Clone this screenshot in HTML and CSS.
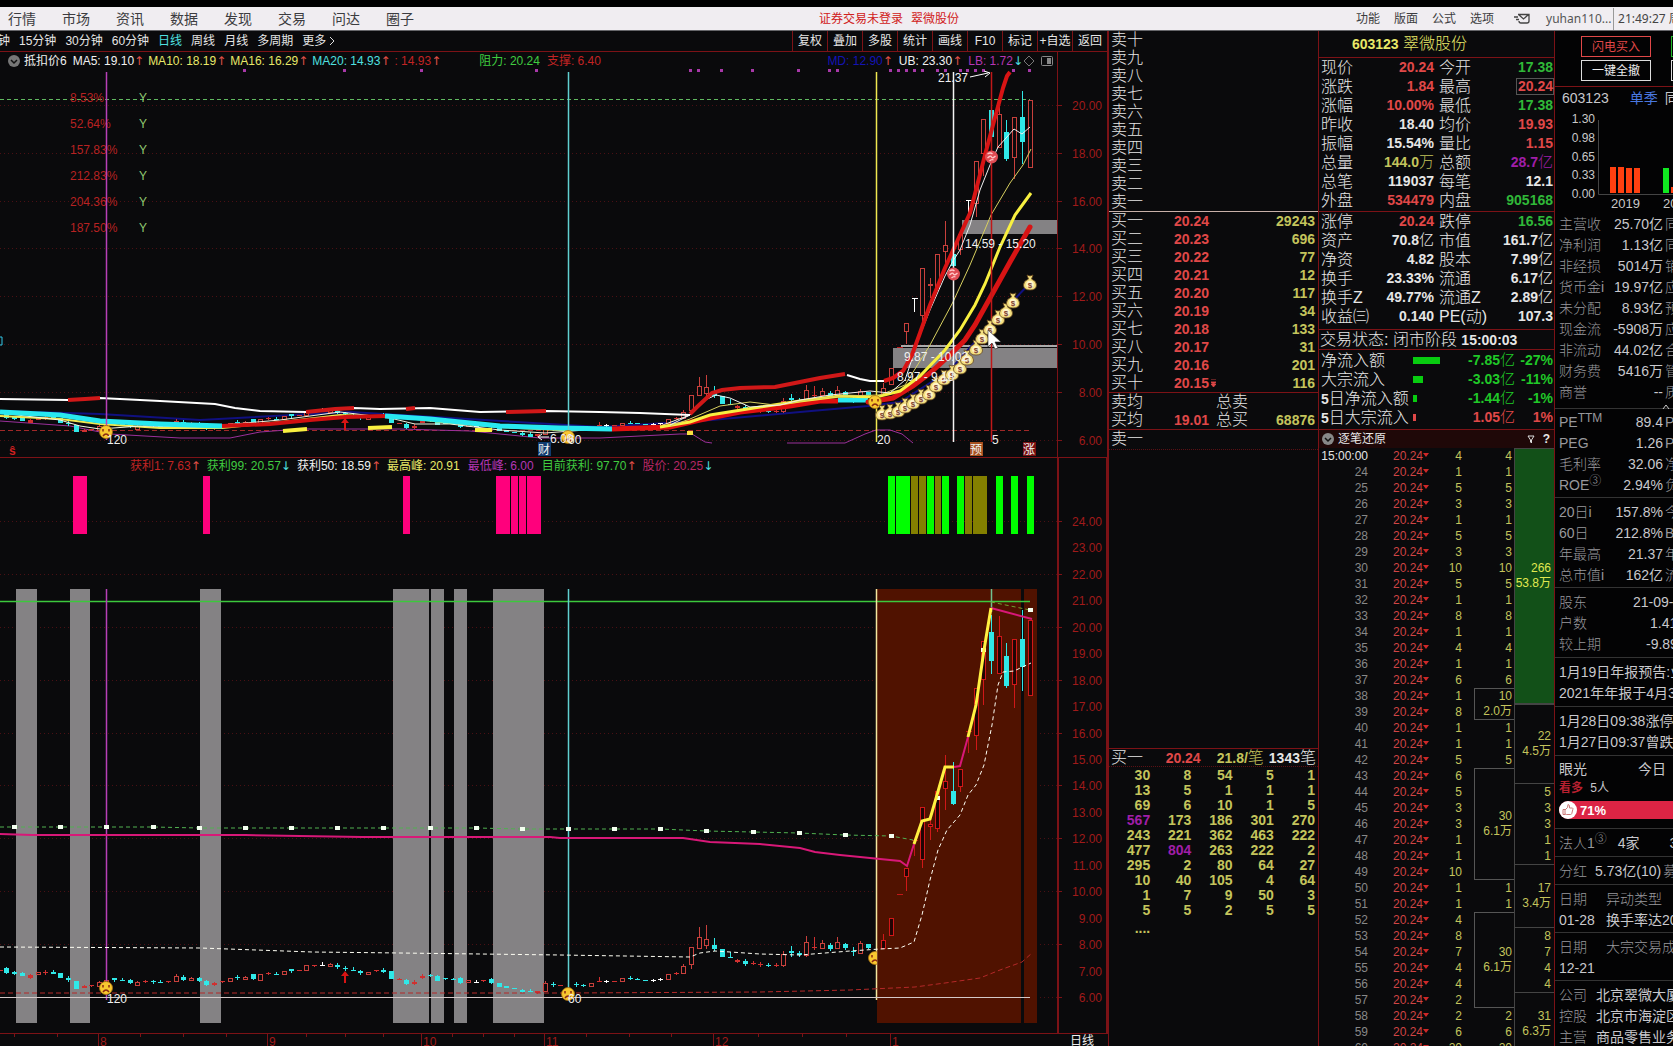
FILE: index.html
```html
<!DOCTYPE html>
<html lang="zh-CN">
<head>
<meta charset="utf-8">
<title>翠微股份 603123</title>
<link rel="stylesheet" href="styles.css">
</head>
<body>
<div class="app">
  <header class="menubar">
    <nav class="menu-main">
      <a href="#">行情</a><a href="#">市场</a><a href="#">资讯</a><a href="#">数据</a><a href="#">发现</a><a href="#">交易</a><a href="#">问达</a><a href="#">圈子</a>
    </nav>
    <div class="menu-title"><span>证券交易未登录</span><span>翠微股份</span></div>
    <div class="menu-side">
      <nav class="menu-tools"><a href="#">功能</a><a href="#">版面</a><a href="#">公式</a><a href="#">选项</a></nav>
      <svg class="mail" width="16" height="12" viewBox="0 0 16 12"><path d="M4 1.500h11v6.500q0 2-2 2H7q-2 0-2-2M4.500 1.500l5 4.500 5-4.500M0 4h4M2 6.500h3" fill="none" stroke="#444" stroke-width="1.300"/></svg>
      <span class="user">yuhan110...</span>
      <span class="clock">21:49:27 周五</span>
    </div>
  </header>

  <main class="workspace">
    <section class="charts">
      <div class="toolbar">
        <nav class="periods">
          <a class="cut" href="#">钟</a><a href="#">15分钟</a><a href="#">30分钟</a><a href="#">60分钟</a><a class="active" href="#">日线</a><a href="#">周线</a><a href="#">月线</a><a href="#">多周期</a><a href="#">更多<svg width="8" height="10" viewBox="0 0 8 10"><path d="M2 1l4 4-4 4" fill="none" stroke="#ddd"/></svg></a>
        </nav>
        <div class="actions">
          <button>复权</button><button>叠加</button><button>多股</button><button>统计</button><button>画线</button><button>F10</button><button>标记</button><button>+自选</button><button>返回</button>
        </div>
      </div>

      <div class="legend">
        <div class="legend-items first">
          <svg width="12" height="12" viewBox="0 0 12 12"><circle cx="6" cy="6" r="6" fill="#777"/><path d="M3 5l3 3 3-3" fill="none" stroke="#111" stroke-width="1.500"/></svg>
          <span class="white">抵扣价6</span>
          <span class="white up">MA5: 19.10</span>
          <span class="yellow up">MA10: 18.19</span>
          <span class="yellow up">MA16: 16.29</span>
          <span class="cyan up">MA20: 14.93</span>
          <span class="red up">: 14.93</span>
        </div>
        <div class="legend-items levels">
          <span class="green">阻力: 20.24</span>
          <span class="red">支撑: 6.40</span>
        </div>
        <div class="legend-items bands">
          <span class="navy up">MD: 12.90</span>
          <span class="white up">UB: 23.30</span>
          <span class="violet down">LB: 1.72</span>
          <svg width="30" height="12" viewBox="0 0 30 12"><path d="M6 1l5 5-5 5-5-5z" fill="none" stroke="#777"/><rect x="18.500" y="1.500" width="11" height="9" rx="1" fill="none" stroke="#888"/><rect x="24" y="3" width="4" height="6" fill="#888"/></svg>
        </div>
        <div class="axis-gap"></div>
      </div>
      <svg class="plot" id="price" viewBox="0 68 1108 389"></svg>

      <div class="legend lower">
        <div class="legend-items profit">
          <span class="red up">获利1: 7.63</span>
          <span class="green down">获利99: 20.57</span>
          <span class="white up">获利50: 18.59</span>
          <span class="yellow">最高峰: 20.91</span>
          <span class="violet">最低峰: 6.00</span>
          <span class="green up">目前获利: 97.70</span>
          <span class="rose down">股价: 20.25</span>
        </div>
        <div class="axis-gap"></div>
      </div>
      <svg class="plot" id="chips" viewBox="0 473 1108 573"></svg>
    </section>

    <section class="book">
      <table class="levels-table sell"><tbody id="asks"></tbody></table>
      <table class="levels-table buy"><tbody id="bids"></tbody></table>
      <table class="totals"><tbody>
        <tr><th>卖均</th><td class="price"></td><th>总卖</th><td class="qty"></td></tr>
        <tr><th>买均</th><td class="price">19.01</td><th>总买</th><td class="qty">68876</td></tr>
      </tbody></table>
      <div class="queue-empty">卖一</div>
      <div class="queue-head"><span>买一</span><b class="up-c">20.24</b><b class="qty-c">21.8/<i>笔</i></b><b>1343<i>笔</i></b></div>
      <table class="queue"><tbody id="queue"></tbody></table>
    </section>

    <section class="quote">
      <h1><b>603123</b> 翠微股份</h1>
      <table class="facts">
        <tbody>
        <tr><th>现价</th><td class="r">20.24</td><th>今开</th><td class="g">17.38</td></tr>
        <tr><th>涨跌</th><td class="r">1.84</td><th>最高</th><td class="r"><span class="boxed">20.24</span></td></tr>
        <tr><th>涨幅</th><td class="r">10.00%</td><th>最低</th><td class="g">17.38</td></tr>
        <tr><th>昨收</th><td>18.40</td><th>均价</th><td class="r">19.93</td></tr>
        <tr><th>振幅</th><td>15.54%</td><th>量比</th><td class="r">1.15</td></tr>
        <tr><th>总量</th><td class="y">144.0<i>万</i></td><th>总额</th><td class="v">28.7<i>亿</i></td></tr>
        <tr><th>总笔</th><td>119037</td><th>每笔</th><td>12.1</td></tr>
        <tr><th>外盘</th><td class="r">534479</td><th>内盘</th><td class="g">905168</td></tr>
        </tbody>
      </table>
      <table class="facts second">
        <tbody>
        <tr><th>涨停</th><td class="r">20.24</td><th>跌停</th><td class="g">16.56</td></tr>
        <tr><th>资产</th><td>70.8<i>亿</i></td><th>市值</th><td>161.7<i>亿</i></td></tr>
        <tr><th>净资</th><td>4.82</td><th>股本</th><td>7.99<i>亿</i></td></tr>
        <tr><th>换手</th><td>23.33%</td><th>流通</th><td>6.17<i>亿</i></td></tr>
        <tr><th>换手Z</th><td>49.77%</td><th>流通Z</th><td>2.89<i>亿</i></td></tr>
        <tr><th>收益㈢</th><td>0.140</td><th>PE(动)</th><td>107.3</td></tr>
        </tbody>
      </table>
      <div class="status">交易状态: 闭市阶段 <b>15:00:03</b></div>
      <table class="flows">
        <tbody>
        <tr><th>净流入额</th><td class="bar"><span style="width:27px"></span></td><td class="amt">-7.85<i>亿</i></td><td class="pct">-27%</td></tr>
        <tr><th>大宗流入</th><td class="bar"><span style="width:10px"></span></td><td class="amt">-3.03<i>亿</i></td><td class="pct">-11%</td></tr>
        <tr><th><b>5</b>日净流入额</th><td class="bar"><span style="width:4px"></span></td><td class="amt">-1.44<i>亿</i></td><td class="pct">-1%</td></tr>
        <tr class="gain"><th><b>5</b>日大宗流入</th><td class="bar"><span style="width:3px"></span></td><td class="amt">1.05<i>亿</i></td><td class="pct">1%</td></tr>
        </tbody>
      </table>
      <div class="tick-head">
        <svg width="12" height="12" viewBox="0 0 12 12"><circle cx="6" cy="6" r="6" fill="#888"/><path d="M3 5l3 3 3-3" fill="none" stroke="#111" stroke-width="1.500"/></svg>
        <span>逐笔还原</span>
        <svg class="filter" width="8" height="9" viewBox="0 0 8 9"><path d="M1 1h6L4.500 5v3L3.500 7V5z" fill="none" stroke="#ddd"/></svg>
        <b>?</b>
      </div>
      <table class="ticks">
        <colgroup><col class="c-time"><col class="c-price"><col class="c-vol"><col class="c-sum"><col class="c-total"></colgroup>
        <tbody id="ticks"></tbody>
      </table>
    </section>

    <aside class="info">
      <div class="trade">
        <button class="buy-btn">闪电买入</button><button class="sell-btn">闪电卖出</button>
        <button>一键全撤</button><button>一键买撤</button>
      </div>
      <div class="code-row"><span>603123</span><a href="#">单季</a><span>同比</span></div>
      <svg class="mini" width="118" height="108" viewBox="1555 108 118 108">
        <g fill="#c8c8c8" font-size="12" text-anchor="end"><text x="1595" y="123">1.30</text><text x="1595" y="142">0.98</text><text x="1595" y="161">0.65</text><text x="1595" y="179">0.33</text><text x="1595" y="198">0.00</text></g>
        <path d="M1598.500 120v74.500h75" fill="none" stroke="#444"/>
        <path d="M1610 167h6v26h-6zM1618 167h6v26h-6zM1626 168h6v25h-6zM1634 168h6v25h-6zM1671 187h6v6h-6z" fill="#ff4010"/>
        <path d="M1663 168h6v25h-6z" fill="#10e820"/>
        <g fill="#c8c8c8" font-size="13"><text x="1611" y="208">2019</text><text x="1663" y="208">2020</text></g>
      </svg>
      <dl class="rows">
        <div><dt>主营收</dt><dd>25.70亿</dd><dt>同比</dt></div>
        <div><dt>净利润</dt><dd>1.13亿</dd><dt>同比</dt></div>
        <div><dt>非经损</dt><dd>5014万</dd><dt>销售</dt></div>
        <div><dt>货币金i</dt><dd>19.97亿</dd><dt>应收</dt></div>
        <div><dt>未分配</dt><dd>8.93亿</dd><dt>预收</dt></div>
        <div><dt>现金流</dt><dd>-5908万</dd><dt>应付</dt></div>
        <div><dt>非流动</dt><dd>44.02亿</dd><dt>合同</dt></div>
        <div><dt>财务费</dt><dd>5416万</dd><dt>管理</dt></div>
        <div><dt>商誉</dt><dd>--</dd><dt>质押</dt></div>
      </dl>
      <div class="fold"><svg width="8" height="6" viewBox="0 0 8 6"><path d="M1 5l3-4 3 4" fill="none" stroke="#ccc"/></svg></div>
      <dl class="rows block tight">
        <div><dt>PE<sup>TTM</sup></dt><dd>89.4</dd><dt>PB</dt></div>
        <div><dt>PEG</dt><dd>1.26</dd><dt>PS</dt></div>
        <div><dt>毛利率</dt><dd>32.06</dd><dt>净利</dt></div>
        <div><dt>ROE<sup>③</sup></dt><dd>2.94%</dd><dt>负债</dt></div>
      </dl>
      <dl class="rows block tight">
        <div><dt>20日i</dt><dd>157.8%</dd><dt>今年</dt></div>
        <div><dt>60日</dt><dd>212.8%</dd><dt>BETA</dt></div>
        <div><dt>年最高</dt><dd>21.37</dd><dt>年低</dt></div>
        <div><dt>总市值i</dt><dd>162亿</dd><dt>流通</dt></div>
      </dl>
      <dl class="rows block wide">
        <div><dt>股东</dt><dd>21-09-30</dd></div>
        <div><dt>户数</dt><dd>1.41万</dd></div>
        <div><dt>较上期</dt><dd>-9.89%</dd></div>
      </dl>
      <div class="block news"><p>1月19日年报预告:业绩</p><p>2021年年报于4月30日</p></div>
      <div class="block news"><p>1月28日09:38涨停</p><p>1月27日09:37曾跌停</p></div>
      <div class="block view">
        <p><span>眼光</span><span class="today">今日</span></p>
        <p class="small"><b>看多</b> 5人</p>
        <div class="vote"><svg width="18" height="18" viewBox="0 0 18 18"><circle cx="9" cy="9" r="9" fill="#fff"/><path d="M4 8.500h2v5H4zM6 9l2.500-2.500.500-3q2 0 1.500 3.500h3q.800.500.300 1.500l-1 4q-.300 1-1.300 1H7.500L6 13" fill="none" stroke="#c77"/></svg><b>71%</b></div>
      </div>
      <div class="block line"><span class="dim">法人1<sup>③</sup></span><span class="gap-a">4家</span><span class="gap-b">3.2亿</span></div>
      <div class="block line"><span class="dim">分红</span><span class="gap-c">5.73亿(10)</span><span class="dim">募资</span></div>
      <div class="block news grid"><span class="dim">日期</span><span class="dim">异动类型</span><span>01-28</span><span>换手率达20%</span></div>
      <div class="block news grid"><span class="dim">日期</span><span class="dim">大宗交易成交</span><span>12-21</span></div>
      <div class="block news firm"><span class="dim">公司</span><span>北京翠微大厦</span><span class="dim">控股</span><span>北京市海淀区</span><span class="dim">主营</span><span>商品零售业务</span></div>
    </aside>
  </main>
</div>
<script src="app.js"></script>
</body>
</html>
```
FILE: styles.css
```css
* { box-sizing: border-box; }
body {
  margin: 0;
  background: #0a0a0c;
  color: #e6e6e6;
  font: 12px/16px "Liberation Sans", "Noto Sans CJK SC", sans-serif;
}
a { color: inherit; text-decoration: none; }
button { font: inherit; color: inherit; background: none; border: 0; padding: 0; }
i { font-style: normal; font-weight: 300; line-height: 1; }
b { font-weight: 700; line-height: 1; }
p, dl, dd, h1 { margin: 0; }
table { border-collapse: collapse; border-spacing: 0; width: 100%; }
td, th { padding: 0; text-align: right; white-space: nowrap; vertical-align: middle; }
th { font-weight: 300; text-align: left; }

.app { height: 100vh; overflow: hidden; display: flex; flex-direction: column; border-top: 7px solid #000; }

/* Menu bar */
.menubar {
  display: flex; align-items: center; flex: none; height: 24px; overflow: hidden;
  background: #f0edf1; color: #3c3c40; border-bottom: 1px solid #66666a; white-space: nowrap;
}
.menu-main { display: flex; gap: 26px; padding-left: 8px; font-size: 14px; }
.menu-title { display: flex; gap: 8px; margin: 0 auto; padding-left: 8px; color: #d02020; }
.menu-side { display: flex; align-items: center; width: 317px; flex: none; overflow: hidden; }
.menu-side > * { flex: none; }
.menu-tools { display: flex; gap: 14px; }
.mail { margin: 0 16px 0 20px; }
.user { font: 12px/16px "Noto Sans", sans-serif; width: 67px; color: #555; }
.clock { font: 12px/22px "Noto Sans", "Noto Sans CJK SC", sans-serif; border-left: 1px solid #999; padding-left: 4px; color: #444; }

.workspace { flex: 1; min-height: 0; display: grid; grid-template-columns: minmax(0, 1fr) 210px 237px 118px; }
.workspace > section, .workspace > aside { overflow: hidden; min-width: 0; }

/* Chart column */
.charts { display: flex; flex-direction: column; }
.toolbar { display: flex; justify-content: space-between; flex: none; height: 21px; border-bottom: 1px solid #7c1216; line-height: 20px; }
.periods { display: flex; gap: 9px; white-space: nowrap; }
.periods .cut { margin-left: -2px; }
.periods .active { color: #4fe0e0; }
.periods svg { margin-left: 2px; vertical-align: -1px; }
.actions { display: grid; grid-template-columns: repeat(9, 35px); border-right: 1px solid #7c1216; }
.actions button { border-left: 1px solid #7c1216; white-space: nowrap; }

.legend { display: flex; flex: none; height: 16px; line-height: 16px; white-space: nowrap; }
.legend-items { display: flex; align-items: center; gap: 7px; padding-top: 2px; }
.legend-items svg { flex: none; }
.legend-items.first { gap: 6px; padding-left: 8px; }
.first svg + span { margin-left: -2px; }
.levels { margin-left: 40px; }
.bands { margin-left: auto; gap: 8px; }
.bands svg { margin: 0 4px 0 -6px; }
.axis-gap { width: 51px; flex: none; border-left: 1px solid #7c1216; border-right: 1px solid #7c1216; }
.bands + .axis-gap { height: 16px; }
.legend.lower { border-top: 1px solid #7c1216; }
.profit { padding: 0 0 0 130px; gap: 8px; }
.lower .axis-gap { margin-left: auto; border-width: 0 2px; border-style: solid; border-color: #7c1216; }
.up::after, .down::after { content: "↑"; color: #e05048; font-family: "DejaVu Sans", sans-serif; font-size: 12px; margin: 0 -2px 0 0; line-height: 10px; }
.down::after { content: "↓"; color: #4fe0e0; }
.white { color: #f0f0f0; }
.yellow { color: #e8e868; }
.cyan { color: #4fe0e0; }
.red { color: #c22424; }
.green { color: #40cc40; }
.navy { color: #1414b4; }
.violet { color: #b436b4; }
.rose { color: #b82866; }

.plot { display: block; width: 100%; height: auto; flex: none; }
.plot text { font-size: 12px; fill: #f0f0f0; }
.plot .axis text { fill: #a01a1a; text-anchor: end; }
.plot .months text { fill: #a01a1a; }
.plot .gain text { fill: #b82222; }
.plot .gain .mark { fill: #90c870; }
.plot .bag text { font-size: 8px; font-weight: bold; fill: #804030; text-anchor: middle; }
.plot .grid { stroke: #4a1014; stroke-dasharray: 1 3; }

/* Order book */
.book { border-left: 1px solid #7c1216; display: flex; flex-direction: column; }
.book th { font-size: 16px; padding-left: 2px; }
.levels-table td, .totals td, .queue td { font-size: 14px; font-weight: bold; }
.levels-table { table-layout: fixed; }
.levels-table tr { height: 18px; line-height: 18px; }
.levels-table th { width: 63px; }
.levels-table .price { width: 37px; }
.buy { border-top: 1px solid #c8b0a8; }
.price, .up-c { color: #e04848; }
.price { position: relative; }
.floor { position: absolute; left: 100%; top: 5px; margin-left: 2px; }
.qty, .qty-c { color: #c4c45c; }
.levels-table .qty, .totals .qty { padding-right: 3px; }
.totals { table-layout: fixed; border-top: 1px solid #7c1216; border-bottom: 1px solid #7c1216; }
.totals tr { height: 18px; line-height: 18px; }
.totals th:first-child { width: 63px; }
.totals .price { width: 37px; }
.totals .price + th { padding-left: 7px; width: 44px; }
.queue-empty { height: 20px; padding-left: 2px; font-size: 16px; font-weight: 300; line-height: 18px; border-bottom: 1px dotted #5a1014; margin-bottom: 298px; }
.queue-head { display: flex; align-items: center; gap: 5px; height: 19px; padding: 0 2px; font-size: 14px; line-height: 17px; border-top: 1px solid #7c1216; border-bottom: 1px dotted #5a1014; white-space: nowrap; }
.queue-head span, .queue-head i { font-size: 16px; font-weight: 300; }
.queue-head span { margin-right: auto; }
.queue-head .up-c { margin-right: 11px; }
.queue { table-layout: fixed; width: 206px; margin-top: 1px; }
.queue tr { height: 15px; line-height: 15px; color: #c4c45c; }
.queue .big { color: #a01ea8; }
.queue tr:last-child { height: 20px; }

/* Quote panel */
.quote { border-left: 1px solid #7c1216; border-right: 1px solid #7c1216; }
.quote h1 { height: 27px; padding-right: 54px; text-align: center; font-size: 16px; font-weight: 300; line-height: 26px; color: #e8e868; border-bottom: 1px solid #7c1216; }
.quote h1 b { font-size: 14px; }
.facts { table-layout: fixed; }
.facts tr, .flows tr { height: 19px; line-height: 19px; }
.facts th, .flows th { font-size: 16px; padding-left: 2px; }
.facts th { width: 42px; }
.facts td { font-size: 14px; font-weight: bold; padding-right: 1px; }
.facts i, .flows i { font-size: 15px; }
.facts td + th { width: 64px; padding-left: 4px; }
.facts tr > td:nth-child(2) { width: 74px; }
.facts.second { border-top: 1px solid #7c1216; margin-top: 1px; }
.r { color: #e04848; }
.g { color: #30b838; }
.y { color: #c4c45c; }
.v { color: #a01ea8; }
.boxed { display: inline-block; border: 1px solid #555; padding-left: 1px; line-height: 15px; margin-right: -1px; }
.status { height: 21px; padding-left: 1px; border-top: 1px solid #7c1216; border-bottom: 1px solid #7c1216; font-size: 16px; font-weight: 300; line-height: 19px; white-space: nowrap; margin-top: 3px; }
.status b { font-size: 14px; }
.flows { table-layout: fixed; color: #20c828; margin-top: 1px; }
.flows th { width: 94px; color: #e6e6e6; }
.flows th b { font-size: 14px; }
.flows td { font-size: 14px; font-weight: bold; }
.flows .bar { width: 28px; text-align: left; }
.bar span { display: block; height: 7px; background: #08cc10; }
.flows .amt { width: 74px; }
.flows .pct { padding-right: 1px; }
.flows .gain { color: #e04848; }
.gain .bar span { background: #e04848; }
.tick-head { display: flex; align-items: center; gap: 4px; height: 19px; margin-top: 2px; padding: 0 4px 0 3px; background: #1f0808; border-top: 1px solid #7c1216; }
.tick-head .filter { margin-left: auto; margin-right: 4px; }
.ticks { table-layout: fixed; border-collapse: separate; color: #c4c45c; }
.c-time { width: 49px; }
.c-price { width: 61px; }
.c-vol { width: 35px; }
.c-sum { width: 50px; }
.ticks tr { height: 16px; line-height: 15px; }
.ticks th { text-align: right; font-weight: normal; color: #888; }
.ticks tr:first-child th { color: #e6e6e6; }
.ticks .p { color: #d04444; }
.ticks .p::after { content: ""; display: inline-block; border: 3px solid transparent; border-top: 4px solid #d02828; border-bottom: 0; margin-bottom: 3px; }
.ticks td { padding-right: 2px; }
.ticks td.p { padding-right: 0; }
.ticks .total { padding-right: 3px; border-left: 1px solid #444; }
.ticks .merged { border-top: 1px solid #444; border-bottom: 1px solid #444; }
.ticks .merged span { display: block; }
.ticks .sum.merged { padding: 0; border: 0; height: 1px; }
.ticks .frame { display: flex; flex-direction: column; justify-content: center; height: 100%; margin-left: 10px; padding-right: 2px; border: 1px solid #555; border-right: 0; }
.ticks .hot { background: #125018; color: #e0e850; }

/* Fundamentals sidebar */
.info { background: #030304; font-size: 14px; color: #c8c8cc; white-space: nowrap; }
.trade { display: grid; grid-template-columns: 70px 70px; gap: 3px 20px; padding: 5px 0 5px 26px; border-bottom: 1px solid #7c1216; font-size: 12px; }
.trade button { height: 21px; border: 1px solid #ddd; color: #eee; white-space: nowrap; }
.trade .buy-btn { border-color: #e04848; color: #e04848; }
.trade .sell-btn { border-color: #20b828; color: #20b828; }
.code-row { display: flex; height: 21px; padding: 2px 0 0 7px; line-height: 18px; }
.code-row a { color: #4a78e0; margin: 0 7px 0 21px; }
.mini { display: block; margin-bottom: -2px; }
.rows > div { display: flex; height: 21px; line-height: 21px; padding-left: 4px; }
.rows dt { width: 46px; flex: none; color: #98989c; font-weight: 300; }
.rows dd { width: 58px; flex: none; display: flex; justify-content: flex-end; }
.rows dd + dt { margin-left: 2px; }
.wide dd { width: auto; margin-left: 28px; justify-content: flex-start; }
.wide div + div dd { margin-left: 45px; }
.wide div + div + div dd { margin-left: 41px; }
.fold { height: 6px; padding-left: 107px; line-height: 6px; margin-top: -1px; }
.block { border-top: 1px solid #333; padding: 4px 0 2px 4px; margin-left: 0; }
.rows.block { padding-left: 0; }
.tight { padding: 3px 0 1px; }
.tight + .tight { padding-top: 4px; }
sup { font-size: 12px; line-height: 0; vertical-align: 5px; }
.news p { height: 21px; line-height: 21px; }
.view { padding: 3px 0 9px 4px; }
.view p { height: 21px; line-height: 21px; }
.today { margin-left: 51px; }
.view .small { height: 19px; line-height: 17px; font-size: 12px; }
.small b { color: #b82030; margin-right: 4px; }
.vote { display: flex; align-items: center; gap: 3px; height: 18px; margin-top: 2px; background: #dc2444; color: #fff; border-radius: 9px 0 0 9px; font-size: 13px; }
.dim { color: #98989c; font-weight: 300; }
.line { display: flex; height: 28px; padding: 0 0 0 4px; line-height: 28px; }
.gap-a { margin: 0 30px 0 11px; }
.gap-c { margin: 0 2px 0 8px; }
.grid.news { display: grid; grid-template-columns: 47px auto; grid-auto-rows: 21px; height: 48px; line-height: 21px; }
.firm { display: grid; grid-template-columns: 37px auto; grid-auto-rows: 21px; line-height: 21px; }
```
FILE: app.js
```js
const el = (id) => document.getElementById(id);

/* ---------- Order book ---------- */
const names = ['一', '二', '三', '四', '五', '六', '七', '八', '九', '十'];
const bidQty = [29243, 696, 77, 12, 117, 34, 133, 31, 201, 116];
el('asks').innerHTML = [...names].reverse()
  .map((n) => `<tr><th>卖${n}</th><td class="price"></td><td class="qty"></td></tr>`).join('');
const floorMark = '<svg class="floor" width="5" height="8" viewBox="0 0 5 8"><path d="M0 0h5M0 3h5L2.500 5zM0 5h5L2.500 8z" stroke="#e04848" fill="#e04848" stroke-width=".8"/></svg>';
el('bids').innerHTML = bidQty
  .map((q, i) => `<tr><th>买${names[i]}</th><td class="price">${(20.24 - i / 100).toFixed(2)}${i === 9 ? floorMark : ''}</td><td class="qty">${q}</td></tr>`).join('');

const queue = [
  [30, 8, 54, 5, 1], [13, 5, 1, 1, 1], [69, 6, 10, 1, 5], [567, 173, 186, 301, 270],
  [243, 221, 362, 463, 222], [477, 804, 263, 222, 2], [295, 2, 80, 64, 27],
  [10, 40, 105, 4, 64], [1, 7, 9, 50, 3], [5, 5, 2, 5, 5], ['....', '', '', '', ''],
];
el('queue').innerHTML = queue
  .map((r) => '<tr>' + r.map((v) => `<td${v > 500 ? ' class="big"' : ''}>${v}</td>`).join('') + '</tr>').join('');

/* ---------- Tick list ---------- */
const vols = [4, 1, 5, 3, 1, 5, 3, 10, 5, 1, 8, 1, 4, 1, 6, 1, 8, 1, 1, 5, 6, 5, 3, 3, 1, 1, 10, 1, 1, 4, 8, 7, 4, 4, 2, 2, 6, 20];
const sums = { 15: [2, '10', '2.0万'], 20: [7, '30', '6.1万'], 29: [6, '30', '6.1万'] };
const totals = { 0: [16, '266', '53.8万', 'hot'], 16: [5, '22', '4.5万'], 26: [4, '17', '3.4万'], 34: [4, '31', '6.3万'] };
let sumLeft = 0;
let totalLeft = 0;
el('ticks').innerHTML = vols.map((v, i) => {
  let row = `<tr><th>${i ? 23 + i : '15:00:00'}</th><td class="p">20.24</td><td>${v}</td>`;
  if (sums[i]) {
    const [n, a, b] = sums[i];
    sumLeft = n;
    row += `<td class="sum merged" rowspan="${n}"><div class="frame"><span>${a}</span><span>${b}</span></div></td>`;
  } else if (sumLeft <= 0) row += `<td>${v}</td>`;
  if (totals[i]) {
    const [n, a, b, c] = totals[i];
    totalLeft = n;
    row += `<td class="total merged ${c || ''}" rowspan="${n}"><span>${a}</span><span>${b}</span></td>`;
  } else if (totalLeft <= 0) row += `<td class="total">${v}</td>`;
  sumLeft -= 1;
  totalLeft -= 1;
  return row + '</tr>';
}).join('');

/* ---------- Candles ----------
   [x, high, low, bodyTop, bodyBottom, kind], heights on the lower chart's scale.
   h hollow red, c cyan, f filled red, w white, l limit-up line */
const candles = [
  [0, 970, 971, 970, 971, 'f'], [6, 967, 974, 968, 973, 'c'], [14, 971, 975, 972, 974, 'c'], [22, 972, 976, 973, 976, 'c'],
  [30, 974, 979, 975, 978, 'f'], [38, 972, 974, 972, 974, 'h'], [45, 970, 975, 972, 973, 'f'], [53, 970, 974, 972, 974, 'c'],
  [60, 973, 978, 973, 978, 'c'], [68, 976, 982, 978, 980, 'c'], [76, 981, 989, 981, 989, 'c'], [84, 985, 988, 986, 988, 'f'],
  [91, 985, 987, 985, 986, 'f'], [99, 981, 986, 982, 986, 'h'], [106, 978, 990, 980, 990, 'h'], [114, 978, 982, 978, 980, 'c'],
  [122, 978, 981, 980, 981, 'c'], [130, 979, 984, 980, 983, 'c'], [137, 981, 985, 982, 985, 'h'], [145, 980, 983, 981, 982, 'f'],
  [153, 980, 984, 981, 982, 'c'], [160, 980, 983, 982, 983, 'c'], [168, 981, 983, 981, 982, 'f'], [176, 974, 981, 976, 981, 'h'],
  [183, 975, 981, 977, 980, 'c'], [191, 977, 981, 978, 980, 'h'], [199, 977, 982, 978, 981, 'c'], [206, 980, 986, 981, 985, 'c'],
  [214, 982, 986, 983, 985, 'f'], [222, 981, 983, 981, 982, 'f'], [230, 978, 981, 978, 981, 'h'], [237, 975, 980, 977, 978, 'c'],
  [245, 976, 980, 977, 979, 'h'], [253, 974, 980, 974, 979, 'c'], [260, 974, 980, 974, 980, 'h'], [268, 972, 975, 973, 974, 'f'],
  [276, 972, 975, 974, 975, 'c'], [284, 971, 974, 971, 974, 'h'], [291, 969, 973, 969, 971, 'c'], [299, 970, 971, 970, 971, 'f'],
  [306, 965, 971, 965, 970, 'h'], [314, 965, 967, 965, 966, 'f'], [322, 962, 966, 965, 966, 'w'], [330, 963, 967, 964, 966, 'h'],
  [337, 963, 969, 965, 967, 'c'], [345, 966, 971, 968, 969, 'c'], [353, 967, 971, 970, 971, 'c'], [360, 970, 975, 971, 973, 'c'],
  [368, 972, 975, 972, 974, 'h'], [376, 970, 972, 970, 971, 'f'], [383, 968, 973, 970, 972, 'c'], [391, 971, 979, 971, 979, 'c'],
  [399, 978, 980, 979, 980, 'f'], [406, 979, 985, 980, 984, 'c'], [414, 980, 985, 982, 984, 'f'], [422, 974, 979, 976, 978, 'f'],
  [430, 974, 977, 975, 976, 'c'], [437, 975, 981, 976, 981, 'c'], [445, 978, 980, 978, 979, 'c'], [453, 978, 980, 979, 980, 'c'],
  [460, 977, 984, 978, 983, 'c'], [468, 980, 982, 980, 982, 'h'], [476, 980, 983, 982, 983, 'w'], [483, 980, 982, 980, 981, 'f'],
  [491, 978, 984, 979, 983, 'c'], [499, 983, 987, 983, 987, 'c'], [506, 986, 988, 986, 988, 'c'], [514, 988, 989, 988, 989, 'c'],
  [522, 989, 993, 990, 992, 'c'], [530, 989, 994, 991, 994, 'c'], [537, 991, 994, 991, 993, 'f'], [545, 981, 992, 983, 991, 'h'],
  [553, 982, 987, 984, 985, 'c'], [560, 985, 986, 985, 986, 'f'], [576, 982, 987, 984, 985, 'c'], [583, 984, 987, 985, 986, 'c'],
  [591, 983, 987, 983, 986, 'h'], [599, 977, 982, 981, 982, 'f'], [606, 980, 983, 981, 982, 'w'], [614, 981, 982, 981, 982, 'f'],
  [622, 978, 982, 978, 981, 'h'], [630, 976, 980, 978, 979, 'c'], [637, 978, 980, 979, 980, 'c'], [645, 980, 981, 980, 981, 'c'],
  [653, 979, 982, 980, 981, 'w'], [660, 978, 981, 979, 980, 'w'], [668, 974, 979, 974, 979, 'h'], [676, 972, 975, 973, 974, 'f'],
  [683, 964, 974, 966, 973, 'h'], [691, 947, 969, 947, 964, 'h'], [699, 927, 948, 937, 948, 'h'], [706, 925, 949, 939, 945, 'h'],
  [714, 938, 951, 945, 949, 'c'], [722, 949, 957, 949, 957, 'c'], [730, 952, 958, 957, 958, 'c'], [737, 959, 963, 960, 962, 'f'],
  [745, 959, 966, 961, 964, 'c'], [753, 961, 965, 963, 964, 'f'], [760, 962, 967, 964, 965, 'f'], [768, 963, 967, 965, 966, 'c'],
  [776, 963, 967, 965, 966, 'f'], [783, 951, 967, 954, 965, 'h'], [791, 946, 957, 951, 953, 'c'], [799, 951, 957, 953, 955, 'c'],
  [806, 936, 957, 942, 955, 'h'], [814, 937, 950, 947, 948, 'f'], [822, 940, 949, 943, 948, 'h'], [830, 943, 951, 945, 949, 'c'],
  [837, 937, 949, 942, 948, 'h'], [845, 943, 950, 944, 948, 'c'], [853, 947, 956, 951, 952, 'c'], [860, 941, 954, 943, 953, 'h'],
  [868, 944, 949, 944, 948, 'c'], [883, 934, 949, 940, 948, 'h'], [891, 918, 936, 918, 935, 'h'], [899, 894, 895, 894, 895, 'l'],
  [906, 868, 891, 868, 876, 'h'], [914, 840, 856, 840, 841, 'l'], [922, 807, 868, 807, 859, 'h'], [930, 818, 840, 824, 826, 'h'],
  [937, 791, 832, 791, 828, 'h'], [945, 755, 810, 781, 788, 'h'], [953, 762, 805, 791, 804, 'c'], [960, 769, 792, 769, 786, 'h'],
  [968, 731, 753, 731, 732, 'l'], [976, 688, 750, 688, 735, 'h'], [983, 641, 705, 641, 679, 'h'], [991, 615, 674, 632, 661, 'c'],
  [999, 616, 674, 636, 673, 'h'], [1006, 643, 688, 656, 686, 'c'], [1014, 639, 708, 639, 684, 'h'], [1022, 610, 691, 639, 667, 'c'],
  [1030, 620, 696, 620, 695, 'h'],
];

const priceOf = (y) => 6 + (997.5 - y) / 26.5;
const upperY = (y) => Math.round(105.5 + (20 - priceOf(y)) * 23.9);
const red = '#c8403c';

function drawCandles(toY, upper) {
  return candles.map(([x, hi, lo, t, b, kind]) => {
    const [h, l, top, bot] = [hi, lo, t, b].map(toY);
    const height = Math.max(1, bot - top);
    const cx = x + 0.5;
    if (kind === 'l') {
      return upper && x > 900
        ? `<path d="M${x - 2} ${top}.5h6M${cx} ${top}V${l}" stroke="#fff"/>`
        : `<path d="M${x - 2} ${top}.5h6M${cx} ${top}V${l}" stroke="#c01818"/>`;
    }
    const color = { h: !upper && x > 877 ? '#d01818' : red, f: '#d03030', c: '#30e8e8', w: '#fff' }[kind];
    const fill = !upper && x > 877 ? '#200404' : '#0a0a0c';
    if (kind === 'h') {
      return `<path d="M${cx} ${h}V${top}M${cx} ${bot}V${l}" stroke="${color}"/><rect x="${x - 2 + 0.5}" y="${top + 0.5}" width="4" height="${height}" fill="${fill}" stroke="${color}"/>`;
    }
    return `<path d="M${cx} ${h}V${l}" stroke="${color}"/><rect x="${x - 2}" y="${top}" width="5" height="${height}" fill="${color}"/>`;
  }).join('');
}

const line = (points, color, width = 1, extra = '') =>
  `<polyline points="${points}" fill="none" stroke="${color}" stroke-width="${width}" ${extra}/>`;
const vline = (x, y1, y2, color, width = 1.5) => `<path d="M${x} ${y1}V${y2}" stroke="${color}" stroke-width="${width}"/>`;
const rects = (list, y, h, color) => list.map(([a, b]) => `<rect x="${a}" y="${y}" width="${b - a}" height="${h}" fill="${color}"/>`).join('');
const bag = (x, y) => `<g class="bag"><path d="M${x - 3} ${y - 8}q3 2 6 0l-1.500 4q5 2 5 6 0 5-6.500 5t-6.500-5q0-4 5-6z" fill="#f4e080" stroke="#6a4a20" stroke-width=".8"/><circle cx="${x}" cy="${y + 1.5}" r="3.800" fill="#fff4c8"/><text x="${x}" y="${y + 4.5}">$</text></g>`;
const face = (x, y) => `<g><circle cx="${x}" cy="${y}" r="6.500" fill="#f8c830" stroke="#a87010" stroke-width=".8"/><path d="M${x - 3} ${y - 3}v2.500M${x + 3} ${y - 3}v2.500M${x - 3} ${y + 4}q3-4 6 0" stroke="#8a2810" fill="none" stroke-width="1.500"/></g>`;
const ball = (x, y) => `<circle cx="${x}" cy="${y}" r="6.500" fill="#e04c54"/><path d="M${x - 4} ${y - 3}q3-2 5 0M${x - 4} ${y + 1}q3-3 4-1t4-1M${x - 2} ${y + 4}q2-2 4-1" stroke="#ffc8c8" fill="none" stroke-width="1.300"/>`;
const arrowUp = (x, y) => `<path d="M${x} ${y - 6}l4 5h-3v7h-2v-7h-3z" fill="#d81414"/>`;
const tag = (x, y, char, bg) => `<rect x="${x - 6}" y="${y - 7}" width="13" height="14" fill="${bg}"/><text x="${x - 6}" y="${y + 5}">${char}</text>`;

/* ---------- Upper chart ---------- */
const axis1 = [20, 18, 16, 14, 12, 10, 8, 6];
const y1 = (p) => Math.round(105 + (20 - p) * 23.9);
let s = '';
axis1.forEach((p) => { s += `<path class="grid" d="M0 ${y1(p)}.5H1057"/><path d="M1057 ${y1(p)}.5h5" stroke="#7c1216"/>`; });
s += vline(1057.5, 68, 457, '#7c1216', 1) + vline(1107.5, 68, 457, '#7c1216', 1);
s += '<g class="axis">' + axis1.map((p) => `<text x="1102" y="${y1(p) + 5}">${p.toFixed(2)}</text>`).join('') + '</g>';
s += [244, 344, 421, 536, 690, 698, 721, 752, 798, 829, 837, 890, 898, 906, 914, 922, 937, 945, 960, 967, 975, 983, 1013, 1029]
  .map((x) => `<rect x="${x - 1}" y="69" width="3" height="3" fill="#a838a8"/>`).join('');
s += '<path d="M0 99.500H1030" stroke="#60b860" stroke-dasharray="4 3"/>';
s += '<rect x="962" y="220" width="95" height="14" fill="#848284"/><rect x="893" y="348" width="164" height="20" fill="#848284"/><path d="M901 346H1057" stroke="#aaa" stroke-width="2"/>';
s += '<g class="gain">' + ['8.53%', '52.64%', '157.83%', '212.83%', '204.36%', '187.50%']
  .map((t, i) => `<text x="70" y="${102 + i * 26}">${t}</text><text class="mark" x="139" y="${102 + i * 26}">Y</text>`).join('') + '</g>';
s += line('0,411 100,414 200,420 350,412 600,427 700,421 800,412 868,406 900,402 950,370 990,325 1030,283', '#101080', 2);
s += '<path d="M0 430.500H1030" stroke="#a02828" stroke-dasharray="5 3"/>';
s += line('0,421 70,426 110,434 180,438 230,438 260,432 300,429 400,429 470,431 540,438 600,438 680,434 692,434 705,442 712,443', '#9a309a');
s += line('787,443 845,443 865,434 876,430 890,430 902,434 913,443', '#9a309a');
s += drawCandles(upperY, true);
s += line('0,416 60,419 100,424 160,428 222,428 290,421 340,415 400,417 450,423 500,427 560,430 612,430', '#f0e850', 2);
s += line('0,413 60,420 80,426 100,429 140,426 200,427 280,420 340,412 390,418 415,424 450,424 500,430 545,433 612,428 660,426 690,415', '#f4f4e0');
s += line('0,412 60,415 100,421 160,424 222,426', '#28e8f0', 5) + line('222,426 270,424 310,420 345,417 385,416', '#d01010', 4);
s += line('385,416 430,419 500,426 560,428 612,429', '#28e8f0', 5);
s += line('612,429 670,427 700,420 740,412 790,406 820,401 838,401', '#e01010', 5) + line('838,400 868,400', '#28e8f0', 5);
s += line('868,402 893,398 913,386 930,373 950,355 965,340 975,325 990,298 1010,262 1030,227', '#d81414', 5, 'stroke-linecap="round"');
s += line('660,427 690,422 710,415 760,407 800,401 840,396 876,397 900,391 920,376 945,350 960,330 975,305 985,284 1000,247 1015,215 1031,193', '#f8f040', 3);
s += line('670,426 690,419 720,406 750,402 775,405 810,400 840,396 880,395 905,385 930,345 953,302 970,265 991,215 1010,183 1023,165 1031,149', '#d8d060');
s += line('670,425 690,415 705,400 716,395 730,398 750,407 780,405 800,400 830,395 870,391 890,393 905,380 920,335 930,310 945,276 953,261 960,250 970,225 980,190 990,165 998,147 1014,129 1022,134 1030,127', '#f0f0f0');
s += line('0,399 68,400 100,398 160,401 215,404 235,408 260,411 306,412 354,408 380,409 430,408 480,412 546,411 600,412 640,413 690,415', '#fff', 2);
s += ['68,400 85,399 100,398', '306,412 335,409 354,408', '406,409 415,408', '506,412 546,411',
  '690,414 697,407 712,393 722,390 740,388 775,387 800,382 820,378 845,374'].map((p) => line(p, '#d01818', 4)).join('');
s += line('847,375 860,379 870,381 884,381', '#fff', 2);
s += line('884,381 893,378 903,371 912,355 920,333 930,305 945,268 960,235 970,213 976,190 985,155 993,125 1003,88 1007,76 1010,72', '#d81414', 4, 'stroke-linejoin="round"');
s += line('283,431 307,429', '#f8f040', 4) + line('368,428 392,427', '#f8f040', 4) + line('475,430 492,430', '#f8f040', 4) + '<rect x="687" y="431" width="6" height="4" fill="#f8e040"/>';
s += vline(106.5, 72, 440, '#b840b8') + vline(568.5, 72, 440, '#60d0d0') + vline(876.5, 72, 442, '#f0e850') + vline(953.5, 72, 442, '#f4f4f4') + vline(991.5, 72, 442, '#c01818');
s += ball(991.5, 157) + ball(953.5, 274) + arrowUp(345, 424);
s += face(106, 432) + face(568, 437) + face(875, 402);
s += [[882, 413], [890, 412], [898, 410], [905, 406], [913, 402], [921, 397], [929, 393], [936, 385], [944, 378], [952, 373], [960, 367], [967, 358], [976, 348], [982, 337], [990, 328], [998, 318], [1006, 311], [1013, 301], [1030, 283]]
  .map(([x, y]) => bag(x, y)).join('');
s += '<text x="938" y="82">21.37</text><path d="M970 77l18-4M984 71l6 2-5 4" fill="none" stroke="#fff"/>';
s += '<text x="965" y="248">14.59 - 15.20</text><text x="904" y="361">9.87 - 10.02</text><text x="897" y="381">8.97 - 9.18</text>';
s += '<text x="107" y="444">120</text><text x="550" y="443">6.00</text><text x="568" y="444">60</text><text x="877" y="444">20</text><text x="992" y="444">5</text><path d="M549 437h-10m3-3l-4 3 4 3" stroke="#fff" fill="none"/>';
s += tag(544, 449, '财', '#103c70') + tag(976, 449, '预', '#a85020') + tag(1029, 449, '涨', '#7a1010');
s += '<text x="9" y="455" font-weight="bold" style="fill:#d02020">ŝ</text><path d="M0 337h2v8h-2" stroke="#30c8e8" fill="none"/>';
s += '<path d="M988 330v17l4-4 3 6 3-1-3-6h6z" fill="#fff" stroke="#222" stroke-width=".6"/>';
el('price').innerHTML = s;

/* ---------- Lower chart ---------- */
const y2 = (p) => Math.round(997 - (p - 6) * 26.45);
s = '';
for (let p = 6; p <= 24; p += 2) s += `<path class="grid" d="M0 ${y2(p)}.5H1057"/><path d="M1057 ${y2(p)}.5h5" stroke="#7c1216"/>`;
s += rects([[16, 37], [70, 90], [200, 221], [393, 429], [431, 444], [454, 467], [493, 544]], 589, 434, '#848284');
s += rects([[877, 1021], [1024, 1037]], 589, 434, '#501200');
s += rects([[73, 87], [203, 210], [403, 410], [496, 510], [511, 518], [519, 526], [527, 541]], 476, 58, '#ff007c');
s += rects([[888, 895], [896, 910], [927, 934], [942, 949], [957, 964], [996, 1003], [1011, 1018], [1027, 1034]], 476, 58, '#00ff00');
s += rects([[911, 918], [919, 926], [935, 941], [965, 972], [973, 987]], 476, 58, '#848000');
s += vline(1058, 473, 1034, '#7c1216', 2) + vline(1107, 473, 1034, '#7c1216', 2) + '<path d="M0 1033.500H1108" stroke="#7c1216"/>';
s += '<g class="axis">';
for (let p = 6; p <= 24; p += 1) s += `<text x="1102" y="${y2(p) + 5}">${p.toFixed(2)}</text>`;
s += '</g><g class="months">' + [[98, '8'], [267, '9'], [421, '10'], [544, '11'], [713, '12'], [890, '1']]
  .map(([x, t]) => `<path d="M${x}.5 1033v13" stroke="#7c1216"/><text x="${x + 2}" y="1046">${t}</text>`).join('') + '</g>';
s += [14, 57, 140, 183, 226, 306, 345, 383, 452, 483, 514, 586, 629, 671, 758, 802, 846].map((x) => `<path d="M${x}.5 1034v3" stroke="#7c1216"/>`).join('');
s += '<text x="1070" y="1045">日线</text>';
s += '<path d="M0 601.500H1030" stroke="#3cc83c" stroke-width="1.500"/>';
s += drawCandles((y) => y, false);
s += vline(106.5, 589, 1000, '#b840b8') + vline(568.5, 589, 990, '#60d0d0') + vline(876.5, 589, 1000, '#f4e8a0') + vline(991.5, 589, 612, '#70c090');
s += '<path d="M0 997.500H1030" stroke="#d4c8c8"/>';
s += line('0,993 568,993 760,992 850,990 915,987 945,983 980,978 1000,970 1022,962 1032,953', '#b42828', 1, 'stroke-dasharray="5 3"');
s += line('0,947 200,948 312,952 400,953 560,955 690,957 700,953 715,951 760,954 800,955 850,951 880,949 900,948 914,942 922,915 930,880 938,850 947,830 960,815 968,795 976,785 984,765 992,725 998,685 1003,672 1014,671 1031,663', '#fffff4', 1, 'stroke-dasharray="4 3"');
const marks = [[14, 827], [60, 827], [106, 827], [153, 827], [199, 828], [245, 828], [291, 828], [337, 828], [383, 828], [430, 828], [476, 828], [522, 829], [568, 829], [614, 829], [660, 829], [706, 831], [753, 832], [799, 833], [845, 835], [891, 836]];
s += line('0,827 ' + marks.map((m) => m.join()).join(' ') + ' 913,840', '#50b050', 1, 'stroke-dasharray="4 3"');
s += line('991,602 1030,610', '#70a030', 1, 'stroke-dasharray="4 3"');
s += marks.concat([[937, 798], [983, 650], [1030, 610]]).map(([x, y]) => `<rect x="${x - 2}" y="${y - 2}" width="5" height="4" fill="#f4fff0"/>`).join('');
s += line('0,834 32,835 245,835 362,837 550,837 560,838 683,838 710,842 760,844 800,848 815,852 840,855 900,861 907,866 914,844', '#d81878', 2);
s += line('954,767 960,766 968,737', '#d81878', 2) + line('991,608 1032,619', '#d81878', 2);
s += line('914,844 922,821 930,819 937,795 945,767 954,767', '#fff040', 3) + line('968,737 976,705 984,650 991,608', '#fff040', 3);
s += face(106, 988) + face(568, 994) + arrowUp(345, 977);
s += `<svg x="860" y="945" width="17" height="30" viewBox="860 945 17 30">${face(875, 958)}</svg>`;
s += '<text x="107" y="1003">120</text><text x="568" y="1003">60</text>';
el('chips').innerHTML = s;
```
